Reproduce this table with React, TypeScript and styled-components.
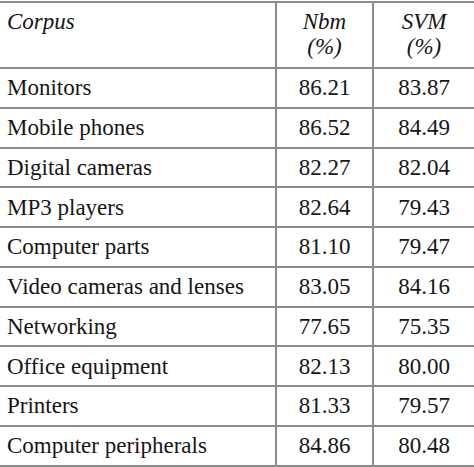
import React from 'react';
import styled, { createGlobalStyle } from 'styled-components';

const GlobalStyle = createGlobalStyle`
  html, body {
    margin: 0;
    padding: 0;
    background: #ffffff;
  }
  body {
    width: 474px;
    height: 467px;
    overflow: hidden;
    font-family: "Liberation Serif", "DejaVu Serif", serif;
  }
`;

const Page = styled.div`
  padding-top: 1px;
  margin-left: -2px;
`;

const Table = styled.table`
  border-collapse: collapse;
  table-layout: fixed;
  width: 476px;
  font-family: "Liberation Serif", "DejaVu Serif", serif;
  font-size: 23px;
  color: #161616;
`;

const HeadCell = styled.th<{ $align?: 'left' | 'center' }>`
  border: 2px solid #8c8c8c;
  height: 58px;
  padding: 6px 0 0 ${(p) => (p.$align === 'left' ? '7px' : '0')};
  vertical-align: top;
  text-align: ${(p) => p.$align || 'center'};
  font-family: inherit;
  font-weight: normal;
  font-style: italic;
  line-height: 25px;
`;

const Cell = styled.td<{ $align?: 'left' | 'center' }>`
  border: 2px solid #8c8c8c;
  height: 37.75px;
  padding: 0 0 0 ${(p) => (p.$align === 'left' ? '7px' : '0')};
  text-align: ${(p) => p.$align || 'center'};
  vertical-align: middle;
  font-family: inherit;
  line-height: 25px;
  white-space: nowrap;
`;

interface ResultRow {
  corpus: string;
  nbm: string;
  svm: string;
}

const rows: ResultRow[] = [
  { corpus: 'Monitors', nbm: '86.21', svm: '83.87' },
  { corpus: 'Mobile phones', nbm: '86.52', svm: '84.49' },
  { corpus: 'Digital cameras', nbm: '82.27', svm: '82.04' },
  { corpus: 'MP3 players', nbm: '82.64', svm: '79.43' },
  { corpus: 'Computer parts', nbm: '81.10', svm: '79.47' },
  { corpus: 'Video cameras and lenses', nbm: '83.05', svm: '84.16' },
  { corpus: 'Networking', nbm: '77.65', svm: '75.35' },
  { corpus: 'Office equipment', nbm: '82.13', svm: '80.00' },
  { corpus: 'Printers', nbm: '81.33', svm: '79.57' },
  { corpus: 'Computer peripherals', nbm: '84.86', svm: '80.48' },
];

const App: React.FC = () => {
  return (
    <Page>
      <GlobalStyle />
      <Table>
        <colgroup>
          <col style={{ width: 277 }} />
          <col style={{ width: 97 }} />
          <col style={{ width: 102 }} />
        </colgroup>
        <thead>
          <tr>
            <HeadCell $align="left">Corpus</HeadCell>
            <HeadCell>
              Nbm
              <br />
              (%)
            </HeadCell>
            <HeadCell>
              SVM
              <br />
              (%)
            </HeadCell>
          </tr>
        </thead>
        <tbody>
          {rows.map((row) => (
            <tr key={row.corpus}>
              <Cell $align="left">{row.corpus}</Cell>
              <Cell>{row.nbm}</Cell>
              <Cell>{row.svm}</Cell>
            </tr>
          ))}
        </tbody>
      </Table>
    </Page>
  );
};

export default App;
